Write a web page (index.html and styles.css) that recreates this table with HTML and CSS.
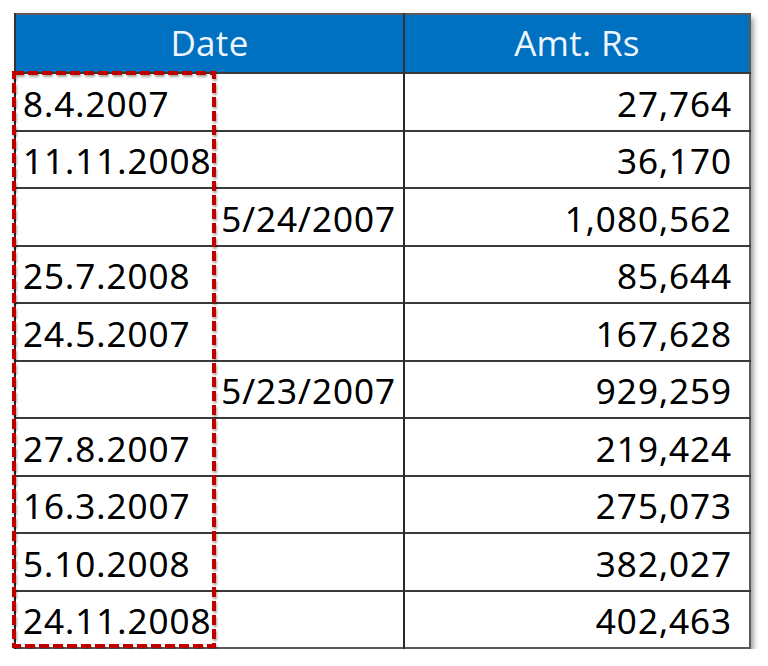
FILE: index.html
```html
<!DOCTYPE html>
<html>
<head>
<meta charset="utf-8">
<link rel="stylesheet" href="styles.css">
</head>
<body>
<div class="frame">
  <table class="sheet">
    <colgroup><col class="c1"><col class="c2"></colgroup>
    <thead>
      <tr><th>Date</th><th>Amt. Rs</th></tr>
    </thead>
    <tbody>
      <tr><td class="txt">8.4.2007</td><td class="num">27,764</td></tr>
      <tr><td class="txt">11.11.2008</td><td class="num">36,170</td></tr>
      <tr><td class="dt">5/24/2007</td><td class="num">1,080,562</td></tr>
      <tr><td class="txt">25.7.2008</td><td class="num">85,644</td></tr>
      <tr><td class="txt">24.5.2007</td><td class="num">167,628</td></tr>
      <tr><td class="dt">5/23/2007</td><td class="num">929,259</td></tr>
      <tr><td class="txt">27.8.2007</td><td class="num">219,424</td></tr>
      <tr><td class="txt">16.3.2007</td><td class="num">275,073</td></tr>
      <tr><td class="txt">5.10.2008</td><td class="num">382,027</td></tr>
      <tr><td class="txt">24.11.2008</td><td class="num">402,463</td></tr>
    </tbody>
  </table>
  <svg class="mark" width="205" height="578" viewBox="0 0 205 578">
    <rect x="2" y="2" width="200" height="573" fill="none" stroke="#c00000" stroke-width="4" stroke-dasharray="10 4"/>
  </svg>
</div>
</body>
</html>
```

FILE: styles.css
```css
html, body {
  margin: 0;
  padding: 0;
  background: #ffffff;
}

body {
  padding: 13px 0 0 14px;
  font-family: "Open Sans", "Liberation Sans", sans-serif;
}

.frame {
  position: relative;
  width: 735px;
  height: 636px;
  box-shadow: 4px 5px 6px rgba(0, 0, 0, 0.45);
}

.sheet {
  width: 735px;
  border-collapse: collapse;
  table-layout: fixed;
  border: 2px solid #5a5a5a;
  font-size: 35px;
  color: #000;
}

.c1 { width: 389px; }
.c2 { width: 346px; }

.sheet thead tr { height: 59px; }
.sheet tbody tr { height: 57.5px; }

.sheet th {
  background: #0070c0;
  color: #eef6ff;
  font-weight: 400;
  text-align: center;
  padding: 0 0 2px 0;
  border-left: 2px solid #333;
  line-height: 1;
  letter-spacing: 0.3px;
}

.sheet td {
  padding: 3px 18px 0 7px;
  border-top: 2px solid #3a3a3a;
  border-left: 2px solid #2a2a2a;
  white-space: nowrap;
  line-height: 1;
  vertical-align: middle;
  letter-spacing: 1px;
  text-shadow: 0 0 0.6px rgba(0, 0, 0, 0.6);
}

.sheet td.txt { text-align: left; }
.sheet td.dt { text-align: right; padding-right: 7px; }
.sheet td.num { text-align: right; padding-right: 17px; }

.mark {
  position: absolute;
  left: -2px;
  top: 58px;
  filter: drop-shadow(1px 2px 1px rgba(0, 0, 0, 0.35));
}
```
